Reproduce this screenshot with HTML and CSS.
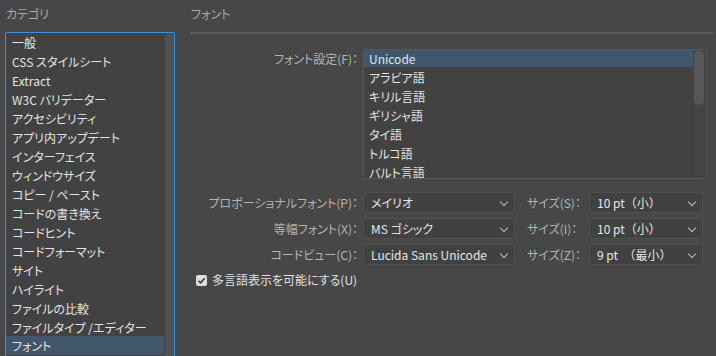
FILE: index.html
```html
<!DOCTYPE html>
<html lang="ja">

<head>
    <meta charset="UTF-8">
    <title>環境設定 - フォント</title>
    <link rel="stylesheet" href="styles.css">
</head>

<body>
    <div class="prefs">

        <!-- Category column -->
        <aside class="category">
            <h2 class="section-title">カテゴリ</h2>
            <div class="category-box">
                <ul class="category-list">
                    <li>一般</li>
                    <li>CSS スタイルシート</li>
                    <li>Extract</li>
                    <li>W3C バリデーター</li>
                    <li>アクセシビリティ</li>
                    <li>アプリ内アップデート</li>
                    <li>インターフェイス</li>
                    <li>ウィンドウサイズ</li>
                    <li>コピー / ペースト</li>
                    <li>コードの書き換え</li>
                    <li>コードヒント</li>
                    <li>コードフォーマット</li>
                    <li>サイト</li>
                    <li>ハイライト</li>
                    <li>ファイルの比較</li>
                    <li>ファイルタイプ /エディター</li>
                    <li class="selected">フォント</li>
                </ul>
                <div class="scrollbar"></div>
            </div>
        </aside>

        <!-- Font settings -->
        <main class="panel">
            <h2 class="section-title panel-title">フォント</h2>

            <div class="encoding-row">
                <label class="field-label">フォント設定(F)：</label>
                <div class="encoding-box">
                    <ul class="encoding-list">
                        <li class="selected">Unicode</li>
                        <li>アラビア語</li>
                        <li>キリル言語</li>
                        <li>ギリシャ語</li>
                        <li>タイ語</li>
                        <li>トルコ語</li>
                        <li>バルト言語</li>
                    </ul>
                    <div class="list-scroll"><span class="thumb"></span></div>
                </div>
            </div>

            <div class="font-grid">
                <label class="field-label">プロポーショナルフォント(P)：</label>
                <div class="select">メイリオ<span class="chevron"></span></div>
                <label class="field-label">サイズ(S)：</label>
                <div class="select size">10 pt（小）<span class="chevron"></span></div>

                <label class="field-label">等幅フォント(X)：</label>
                <div class="select">MS ゴシック<span class="chevron"></span></div>
                <label class="field-label">サイズ(I)：</label>
                <div class="select size">10 pt（小）<span class="chevron"></span></div>

                <label class="field-label">コードビュー(C)：</label>
                <div class="select">Lucida Sans Unicode<span class="chevron"></span></div>
                <label class="field-label">サイズ(Z)：</label>
                <div class="select size">9 pt &nbsp;（最小）<span class="chevron"></span></div>
            </div>

            <label class="checkbox-row">
                <span class="checkbox">
                    <svg width="9" height="9" viewBox="0 0 9 9">
                        <path d="M1.5 4.8 L3.6 6.8 L7.6 2.2" fill="none" stroke="#3a3a3a" stroke-width="1.6" />
                    </svg>
                </span>
                多言語表示を可能にする(U)
            </label>
        </main>
    </div>
</body>

</html>
```

FILE: styles.css
```css
body {
    margin: 0;
    background: #474747;
    color: #e4e4e4;
    font-family: "Noto Sans CJK JP", "Noto Sans", sans-serif;
    font-size: 12px;
    font-feature-settings: "palt";
    overflow: hidden;
}

ul {
    list-style: none;
    margin: 0;
    padding: 0;
}

.prefs {
    display: flex;
    gap: 15px;
    height: 356px;
}

.section-title {
    margin: 0;
    font-size: 12px;
    font-weight: normal;
    color: #a9a9a9;
    line-height: 16px;
    padding-top: 6px;
}

/* Category column */
.category {
    width: 170px;
    padding-left: 5px;
    display: flex;
    flex-direction: column;
}

.category .section-title {
    padding-left: 1px;
}

.category-box {
    margin-top: 10px;
    flex: 1;
    display: flex;
    border: 1px solid #3a8fe6;
    border-bottom: none;
    border-radius: 2px 2px 0 0;
    background: #424242;
}

.category-list {
    flex: 1;
}

.category-list li {
    height: 19px;
    line-height: 19px;
    padding-left: 6px;
    white-space: nowrap;
}

.category-list li.selected {
    background: #41566b;
    margin-top: -1px;
    margin-right: 1px;
}

.scrollbar {
    width: 9px;
    background: #515151;
    border-radius: 5px 5px 0 0;
}

/* Settings panel */
.panel {
    flex: 1;
    padding-right: 3px;
}

.panel-title {
    padding-left: 1px;
    padding-bottom: 10px;
    border-bottom: 2px solid #5a5a5a;
}

.field-label {
    color: #b3b3b3;
    text-align: right;
    white-space: nowrap;
}

.encoding-row {
    display: flex;
    gap: 5px;
    margin-top: 15px;
}

.encoding-row .field-label {
    width: 168px;
    line-height: 20px;
}

.encoding-box {
    width: 342px;
    height: 128px;
    display: flex;
    border: 1px solid #585858;
    border-radius: 2px;
    background: #424242;
    overflow: hidden;
}

.encoding-list {
    flex: 1;
}

.encoding-list li {
    height: 19px;
    line-height: 18px;
    padding-left: 5px;
}

.encoding-list li.selected {
    background: #40566c;
    height: 17px;
    line-height: 17px;
    margin-bottom: 2px;
}

.list-scroll {
    width: 11px;
    background: #444;
    padding: 0 1px;
}

.thumb {
    display: block;
    width: 10px;
    height: 55px;
    background: #575757;
    border-radius: 5px;
}

.font-grid {
    display: grid;
    grid-template-columns: 168px 152px 64px 114px;
    grid-auto-rows: 21px;
    column-gap: 5px;
    row-gap: 5px;
    margin-top: 13px;
    align-items: center;
}

.font-grid .field-label {
    line-height: 21px;
}

.font-grid .field-label:nth-child(4n+3) {
    text-align: left;
    padding-left: 7px;
}

.select {
    position: relative;
    height: 19px;
    line-height: 19px;
    padding-left: 7px;
    border: 1px solid #4f4f4f;
    border-radius: 3px;
    background: #414141;
    color: #e6e6e6;
    white-space: nowrap;
}

.select.size {
    font-feature-settings: normal;
}

.chevron {
    position: absolute;
    right: 7px;
    top: 6px;
    width: 5px;
    height: 5px;
    border-right: 1px solid #bdbdbd;
    border-bottom: 1px solid #bdbdbd;
    transform: rotate(45deg);
}

.checkbox-row {
    display: flex;
    align-items: center;
    gap: 5px;
    margin-top: 5px;
    padding-left: 6px;
    color: #e0e0e0;
    line-height: 20px;
}

.checkbox {
    width: 11px;
    height: 11px;
    border-radius: 2px;
    background: #dedede;
    display: flex;
    align-items: center;
    justify-content: center;
}
```
